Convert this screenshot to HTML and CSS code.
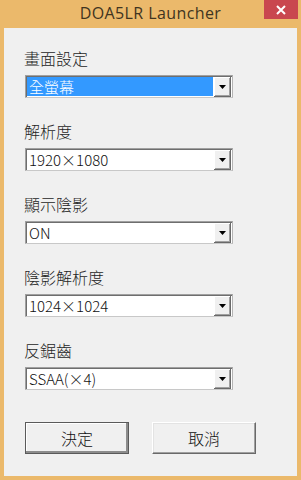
FILE: index.html
```html
<!DOCTYPE html>
<html lang="zh-Hant">
<head>
<meta charset="utf-8">
<title>DOA5LR Launcher</title>
<link rel="stylesheet" href="styles.css">
</head>
<body>
<div class="window">
  <div class="titlebar">
    <span class="spacer"></span>
    <span class="title">DOA5LR Launcher</span>
    <span class="close"><svg width="10" height="10" viewBox="0 0 10 10"><path d="M1 1 L9 9 M9 1 L1 9" stroke="#fff" stroke-width="2"/></svg></span>
  </div>
  <div class="client">
    <div class="field">
      <div class="label">畫面設定</div>
      <div class="combo selected"><span class="value">全螢幕</span><span class="drop"><svg width="7" height="4" viewBox="0 0 7 4"><path d="M0 0 H7 L3.5 4 Z" fill="#000"/></svg></span></div>
    </div>
    <div class="field">
      <div class="label">解析度</div>
      <div class="combo"><span class="value">1920×1080</span><span class="drop"><svg width="7" height="4" viewBox="0 0 7 4"><path d="M0 0 H7 L3.5 4 Z" fill="#000"/></svg></span></div>
    </div>
    <div class="field">
      <div class="label">顯示陰影</div>
      <div class="combo"><span class="value">ON</span><span class="drop"><svg width="7" height="4" viewBox="0 0 7 4"><path d="M0 0 H7 L3.5 4 Z" fill="#000"/></svg></span></div>
    </div>
    <div class="field">
      <div class="label">陰影解析度</div>
      <div class="combo"><span class="value">1024×1024</span><span class="drop"><svg width="7" height="4" viewBox="0 0 7 4"><path d="M0 0 H7 L3.5 4 Z" fill="#000"/></svg></span></div>
    </div>
    <div class="field">
      <div class="label">反鋸齒</div>
      <div class="combo"><span class="value">SSAA(×4)</span><span class="drop"><svg width="7" height="4" viewBox="0 0 7 4"><path d="M0 0 H7 L3.5 4 Z" fill="#000"/></svg></span></div>
    </div>
    <div class="buttons">
      <button class="btn default">決定</button>
      <button class="btn">取消</button>
    </div>
  </div>
</div>
</body>
</html>
```
FILE: styles.css
```css
html, body {
  margin: 0;
  padding: 0;
}
body {
  width: 301px;
  height: 480px;
  overflow: hidden;
}
.window {
  width: 301px;
  height: 480px;
  box-sizing: border-box;
  background: #ebb96b;
  padding: 0 4px 4px 4px;
  display: flex;
  flex-direction: column;
}
.titlebar {
  height: 28px;
  flex: none;
  display: grid;
  grid-template-columns: 1fr auto 1fr;
}
.title {
  font-family: "Open Sans", "Noto Sans", sans-serif;
  font-size: 16px;
  letter-spacing: 0.4px;
  line-height: 26px;
  color: #40341f;
}
.close {
  justify-self: end;
  align-self: start;
  width: 34px;
  height: 19px;
  margin-right: -1px;
  background: #c9474f;
  display: flex;
  align-items: center;
  justify-content: center;
}
.client {
  flex: 1;
  background: #f0f0f0;
  padding: 20px 0 0 20px;
  font-family: "Noto Sans CJK TC", "Noto Sans", sans-serif;
}
.field {
  margin-bottom: 23px;
}
.label {
  font-size: 16px;
  font-weight: 300;
  line-height: 20px;
  color: #1e1e1e;
  margin-bottom: 7px;
}
.combo {
  width: 208px;
  height: 23px;
  margin-left: 1px;
  box-sizing: border-box;
  border: 1px solid #a0a0a0;
  border-right-color: #b4b4b4;
  border-bottom-color: #c8c8c8;
  box-shadow: inset 1px 1px 0 #6e6e6e;
  background: #fff;
  display: flex;
  padding: 1px 1px 0 1px;
}
.value {
  flex: 1;
  font-size: 15px;
  font-weight: 300;
  line-height: 19px;
  height: 19px;
  padding-left: 2px;
  color: #111;
  margin-right: 1px;
}
.selected .value {
  background: #3399ff;
  color: #fff;
}
.drop {
  width: 17px;
  height: 20px;
  box-sizing: border-box;
  background: #f0f0f0;
  box-shadow: inset -1px -1px 0 #696969, inset 1px 1px 0 #ffffff, inset -2px -2px 0 #a0a0a0;
  display: flex;
  align-items: center;
  justify-content: center;
}
.buttons {
  display: flex;
  gap: 23px;
  margin-top: 32px;
  margin-left: 1px;
}
.btn {
  width: 104px;
  height: 32px;
  box-sizing: border-box;
  font-family: "Noto Sans CJK TC", "Noto Sans", sans-serif;
  font-size: 16px;
  font-weight: 300;
  color: #111;
  background: #f0f0f0;
  padding: 0;
  border: 1px solid;
  border-color: #ffffff #696969 #696969 #ffffff;
  box-shadow: inset -1px -1px 0 #a0a0a0, inset 1px 1px 0 #e3e3e3;
}
.btn.default {
  border: 1px solid #5a5a5a;
  box-shadow: inset -2px -2px 0 #8c8c8c, inset 1px 1px 0 #ffffff;
}
```
